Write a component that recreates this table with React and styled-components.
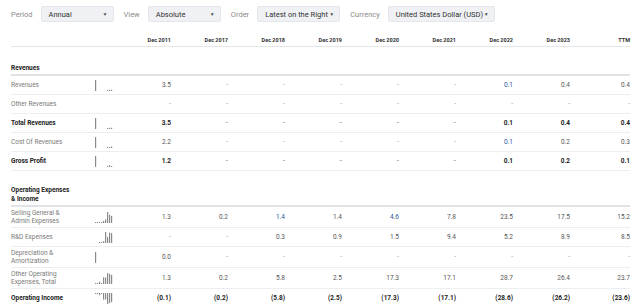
import React from "react";
import styled, { createGlobalStyle } from "styled-components";

const GlobalStyle = createGlobalStyle`
  body {
    margin: 0;
    background: #fff;
    font-family: Roboto, "Liberation Sans", sans-serif;
  }
`;

const Page = styled.div`
  width: 640px;
  box-sizing: border-box;
  padding: 6px 10px 0 11px;
`;

const Toolbar = styled.div`
  display: flex;
  align-items: center;
  height: 16px;
`;

const FilterLabel = styled.span`
  font-size: 7.5px;
  color: #8c8c8c;
  margin-right: 8px;
`;

const Select = styled.div`
  width: ${({ $w }) => $w}px;
  height: 16px;
  box-sizing: border-box;
  display: flex;
  align-items: center;
  justify-content: space-between;
  padding: 0 5px 0 7px;
  margin-right: 10px;
  background: #eff1f4;
  border: 1px solid #e3e6ea;
  border-radius: 2px;
  font-size: 7.5px;
  color: #333;
`;

const Caret = styled.span`
  font-size: 5px;
  color: #555;
`;

const Grid = styled.div`
  display: grid;
  grid-template-columns: 80px 30px 50px repeat(7, 57px) 60px;
  align-items: center;
`;

const HeadRow = styled(Grid)`
  margin-top: 11px;
  height: 13px;
  border-bottom: 1px solid #e4e6e8;
`;

const HeadCell = styled.div`
  grid-column: ${({ $col }) => $col};
  text-align: right;
  font-size: 5.5px;
  font-weight: 700;
  color: #333;
`;

const Section = styled.div`
  display: flex;
  align-items: flex-end;
  height: ${({ $h }) => $h}px;
  box-sizing: border-box;
  padding-bottom: 1px;
  border-bottom: 2px solid #e1e4e7;
`;

const SectionTitle = styled.div`
  width: 62px;
  font-size: 6.5px;
  line-height: 9px;
  font-weight: 700;
  color: #222;
`;

const Row = styled(Grid)`
  min-height: ${({ $tall }) => ($tall ? 21 : 19)}px;
  box-sizing: border-box;
  border-bottom: 1px solid #eceef0;
`;

const Label = styled.div`
  max-width: 64px;
  font-size: 6.5px;
  line-height: 8px;
  font-weight: ${({ $bold }) => ($bold ? 700 : 400)};
  color: ${({ $bold }) => ($bold ? "#222" : "#7a7a7a")};
`;

const SparkCell = styled.div`
  display: flex;
  align-items: center;
  padding-left: 4px;
`;

const Value = styled.div`
  text-align: right;
  font-size: 6.5px;
  font-weight: ${({ $bold }) => ($bold ? 700 : 400)};
  color: ${({ $blue, $bold, $dash }) =>
    $blue ? "#2b5797" : $dash ? "#9a9a9a" : $bold ? "#222" : "#555"};
`;

const columns = [
  "Dec 2011",
  "Dec 2017",
  "Dec 2018",
  "Dec 2019",
  "Dec 2020",
  "Dec 2021",
  "Dec 2022",
  "Dec 2023",
  "TTM",
];

const num = (v) => {
  if (v === "-") return 0;
  const n = parseFloat(v.replace(/[()]/g, ""));
  return isNaN(n) ? 0 : n;
};

const Sparkline = ({ data, down }) => {
  const max = Math.max(...data, 0.0001);
  return (
    <svg width="18" height="12" viewBox="0 0 18 12">
      {data.map((d, i) => {
        if (d <= 0) return null;
        const h = Math.max(1, (d / max) * 11);
        return (
          <rect
            key={i}
            x={i * 2}
            y={down ? 1 : 12 - h}
            width="1.2"
            height={h}
            fill="#8a8a8a"
          />
        );
      })}
    </svg>
  );
};

const revenueRows = [
  {
    label: "Revenues",
    values: ["3.5", "-", "-", "-", "-", "-", "0.1", "0.4", "0.4"],
    blue: [6],
  },
  {
    label: "Other Revenues",
    values: ["-", "-", "-", "-", "-", "-", "-", "-", "-"],
    noSpark: true,
  },
  {
    label: "Total Revenues",
    bold: true,
    values: ["3.5", "-", "-", "-", "-", "-", "0.1", "0.4", "0.4"],
  },
  {
    label: "Cost Of Revenues",
    values: ["2.2", "-", "-", "-", "-", "-", "0.1", "0.2", "0.3"],
    blue: [6],
  },
  {
    label: "Gross Profit",
    bold: true,
    values: ["1.2", "-", "-", "-", "-", "-", "0.1", "0.2", "0.1"],
  },
];

const opexRows = [
  {
    label: "Selling General & Admin Expenses",
    tall: true,
    values: ["1.3", "0.2", "1.4", "1.4", "4.6", "7.8", "23.5", "17.5", "15.2"],
    blue: [2, 4],
  },
  {
    label: "R&D Expenses",
    values: ["-", "-", "0.3", "0.9", "1.5", "9.4", "5.2", "8.9", "8.5"],
  },
  {
    label: "Depreciation & Amortization",
    tall: true,
    values: ["0.0", "-", "-", "-", "-", "-", "-", "-", "-"],
    spark: [1, 0, 0, 0, 0, 0, 0, 0, 0],
  },
  {
    label: "Other Operating Expenses, Total",
    tall: true,
    values: ["1.3", "0.2", "5.8", "2.5", "17.3", "17.1", "28.7", "26.4", "23.7"],
  },
  {
    label: "Operating Income",
    bold: true,
    down: true,
    values: [
      "(0.1)",
      "(0.2)",
      "(5.8)",
      "(2.5)",
      "(17.3)",
      "(17.1)",
      "(28.6)",
      "(26.2)",
      "(23.6)",
    ],
  },
];

const DataRow = ({ row }) => (
  <Row $tall={row.tall}>
    <Label $bold={row.bold}>{row.label}</Label>
    <SparkCell>
      {!row.noSpark && (
        <Sparkline data={row.spark || row.values.map(num)} down={row.down} />
      )}
    </SparkCell>
    {row.values.map((v, i) => (
      <Value
        key={i}
        $bold={row.bold}
        $dash={v === "-"}
        $blue={row.blue && row.blue.includes(i)}
      >
        {v}
      </Value>
    ))}
  </Row>
);

const filters = [
  { label: "Period", value: "Annual", w: 73 },
  { label: "View", value: "Absolute", w: 73 },
  { label: "Order", value: "Latest on the Right", w: 83 },
  { label: "Currency", value: "United States Dollar (USD)", w: 107 },
];

const App = () => (
  <>
    <GlobalStyle />
    <Page>
      <Toolbar>
        {filters.map((f) => (
          <React.Fragment key={f.label}>
            <FilterLabel>{f.label}</FilterLabel>
            <Select $w={f.w}>
              <span>{f.value}</span>
              <Caret>▼</Caret>
            </Select>
          </React.Fragment>
        ))}
      </Toolbar>

      <HeadRow>
        {columns.map((c, i) => (
          <HeadCell key={c} $col={i + 3}>
            {c}
          </HeadCell>
        ))}
      </HeadRow>

      <Section $h={29}>
        <SectionTitle>Revenues</SectionTitle>
      </Section>
      {revenueRows.map((r) => (
        <DataRow key={r.label} row={r} />
      ))}

      <Section $h={36}>
        <SectionTitle>Operating Expenses &amp; Income</SectionTitle>
      </Section>
      {opexRows.map((r) => (
        <DataRow key={r.label} row={r} />
      ))}
    </Page>
  </>
);

export default App;
